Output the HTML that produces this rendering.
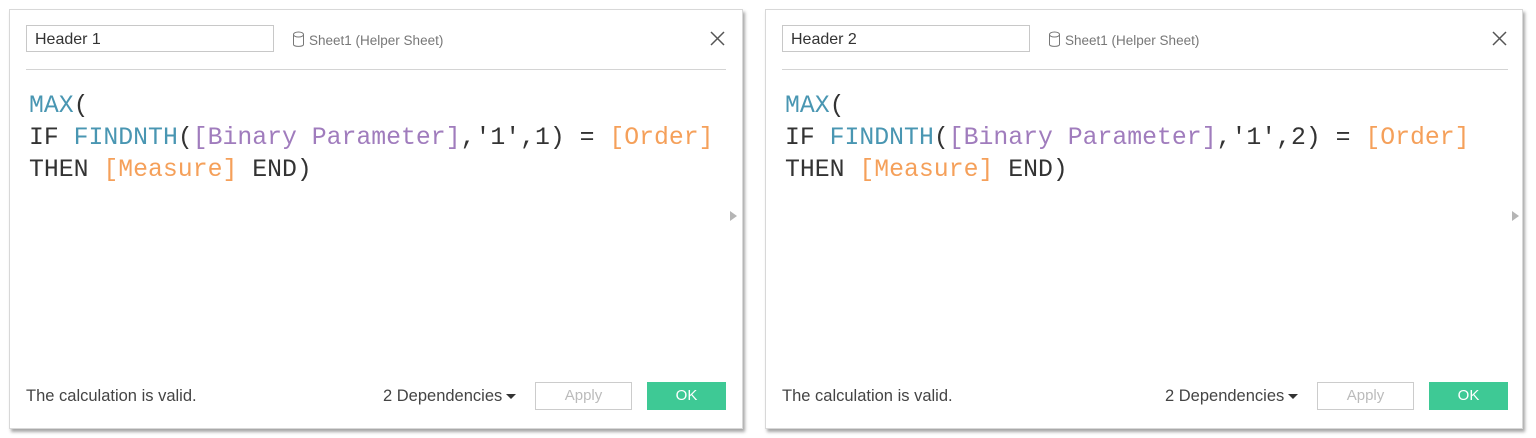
<!DOCTYPE html><html><head><style>
body{margin:0;width:1536px;height:438px;background:#fff;position:relative;font-family:"Liberation Sans",sans-serif;overflow:hidden}
.p{position:absolute;top:9px;width:732px;height:418px;background:#fff;border:1px solid #d8d8d8;box-shadow:2px 3px 3px rgba(0,0,0,.35)}
.in{position:absolute;left:16px;top:15px;width:248px;height:27px;border:1px solid #c8c8c8;font-size:16px;line-height:27px;padding-left:8px;box-sizing:border-box;color:#333}
.ds{position:absolute;left:282px;top:21px;font-size:13.5px;color:#777}
.x{position:absolute;left:700px;top:21px}
.hr{position:absolute;left:16px;top:59px;width:700px;height:1px;background:#d4d4d4}
.code{position:absolute;left:19px;top:80px;font-family:"Liberation Mono",monospace;font-size:24.8px;line-height:32px;color:#333;white-space:pre}
.b{color:#4996b2}.pu{color:#a07cbd}.o{color:#f5a05a}
.arr{position:absolute;left:720px;top:201px;width:0;height:0;border-left:7px solid #b5b5b5;border-top:5px solid transparent;border-bottom:5px solid transparent}
.ft{position:absolute;left:16px;top:377px;font-size:16.5px;color:#444}
.dep{position:absolute;left:373px;top:377px;font-size:16.5px;color:#444}
.ap{position:absolute;left:525px;top:372px;width:97px;height:28px;border:1px solid #ccc;box-sizing:border-box;color:#bbb;font-size:15px;text-align:center;line-height:26px}
.ok{position:absolute;left:637px;top:372px;width:79px;height:28px;background:#3ec995;color:#fff;font-size:15px;text-align:center;line-height:28px}
</style></head><body>
<div class="p" style="left:9px">
<div class="in">Header 1</div>
<div class="ds"><svg width="13" height="17" style="vertical-align:-3px;margin-right:4px"><ellipse cx="6.5" cy="3.5" rx="5" ry="2.5" fill="none" stroke="#777"/><path d="M1.5 3.5V13.5C1.5 16 11.5 16 11.5 13.5V3.5" fill="none" stroke="#777"/></svg>Sheet1 (Helper Sheet)</div>
<svg class="x" width="15" height="15"><path d="M1 1L14 14M14 1L1 14" stroke="#555" stroke-width="1.5"/></svg><div class="hr"></div>
<div class="code"><span class="b">MAX</span>(
IF <span class="b">FINDNTH</span>(<span class="pu">[Binary Parameter]</span>,'1',1) = <span class="o">[Order]</span>
THEN <span class="o">[Measure]</span> END)</div>
<div class="arr"></div>
<div class="ft">The calculation is valid.</div>
<div class="dep">2 Dependencies<svg width="12" height="8" style="margin-left:3px"><path d="M1 1H11L6 6Z" fill="#333"/></svg></div>
<div class="ap">Apply</div><div class="ok">OK</div>
</div>
<div class="p" style="left:765px;width:756px">
<div class="in">Header 2</div>
<div class="ds"><svg width="13" height="17" style="vertical-align:-3px;margin-right:4px"><ellipse cx="6.5" cy="3.5" rx="5" ry="2.5" fill="none" stroke="#777"/><path d="M1.5 3.5V13.5C1.5 16 11.5 16 11.5 13.5V3.5" fill="none" stroke="#777"/></svg>Sheet1 (Helper Sheet)</div>
<svg class="x" width="15" height="15" style="left:726px"><path d="M1 1L14 14M14 1L1 14" stroke="#555" stroke-width="1.5"/></svg><div class="hr" style="width:726px"></div>
<div class="code"><span class="b">MAX</span>(
IF <span class="b">FINDNTH</span>(<span class="pu">[Binary Parameter]</span>,'1',2) = <span class="o">[Order]</span>
THEN <span class="o">[Measure]</span> END)</div>
<div class="arr" style="left:746px"></div>
<div class="ft">The calculation is valid.</div>
<div class="dep" style="left:399px">2 Dependencies<svg width="12" height="8" style="margin-left:3px"><path d="M1 1H11L6 6Z" fill="#333"/></svg></div>
<div class="ap" style="left:551px">Apply</div><div class="ok" style="left:663px">OK</div>
</div>
</body></html>
